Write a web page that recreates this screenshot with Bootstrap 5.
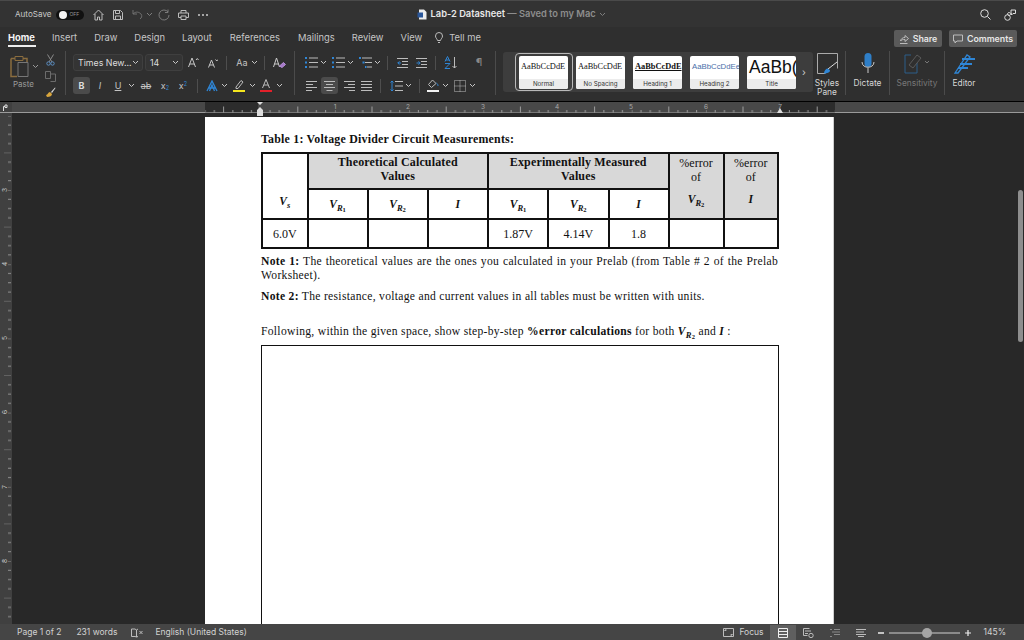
<!DOCTYPE html>
<html lang="en"><head><meta charset="utf-8"><title>Lab-2 Datasheet</title>
<link href="https://cdn.jsdelivr.net/npm/bootstrap@5.3.0/dist/css/bootstrap.min.css" rel="stylesheet">
<style>
html,body{margin:0;height:640px;overflow:hidden;background:#282828}
body{font-family:Inter,"Liberation Sans",sans-serif;font-size:9px;color:#d8d8d8;line-height:1.1}
svg{display:block;flex:none;fill:none;stroke:#bcbcbc;stroke-width:1}
.appwin{width:1024px;height:640px}
.ttl{height:27px;background:#333;border-top:1px solid #4a4a4a;padding-top:1px}
.ttl-c{font-weight:600;color:#e8e8e8;font-size:9.3px;padding-left:1px;margin-left:208px;flex:1}
.ttl-c span{color:#8d8d8d}
.autos{padding-left:15px;font-size:8.1px;color:#c8c8c8}
.tog{width:28px;height:10px;background:#111;border-radius:5px;margin-left:4px;font-size:5px;color:#999;padding-left:3px}
.tog b{width:8px;height:8px;border-radius:50%;background:#f2f2f2;display:block;margin-right:3px}
.tabs{height:23px;background:#2f2f2f;padding-right:7px;font-size:9.4px}
.tabrow{padding:0 0 1px 8px}
.tb{color:#c6c6c6}
.tb-on{color:#f4f4f4;font-weight:700;position:relative}
.tb-on::after{content:"";position:absolute;left:0;right:-1px;top:12px;height:2px;background:#ededed}
.t-a,.t-b,.t-c,.t-d,.t-g,.t-h{margin-left:17px}.t-e,.t-f{margin-left:18px}.t-i{margin-left:13px}.t-j{margin-left:6px}
.sharebtn{height:17px;background:#5a5a5a;border-radius:2px;color:#e6e6e6;font-weight:600;font-size:8.8px}
.w48{width:48px}.w68{width:68px}
.rib{height:52px;background:#2f2f2f;border-bottom:1px solid #000}
.grp{height:44px;margin-top:1px;border-right:1px solid #4b4b4b;flex:none}
.g-clip{width:66px}.g-font{width:229px;padding:3px 0 0 7px}.g-para{width:201px;padding:3px 0 0 10px}
.rw{height:17px;margin-bottom:6px}
.vs{width:1px;height:14px;background:#4e4e4e;flex:none}
.combo{height:17px;border:1px solid #3f3f3f;background:#343434;border-radius:3px;font-size:8.8px;color:#ddd;padding:0 3px 0 4px}
.cmb1{width:70px}.cmb2{width:38px}
.onbox{width:17px;height:17px;background:#4b4b4b;border-radius:3px;flex:none;font-size:9px;color:#ddd}
.g1{margin-left:1px}.g2{margin-left:2px}.g3{margin-left:3px}.g4{margin-left:4px}.g5{margin-left:5px}.g6{margin-left:6px}.g7{margin-left:7px}.g8{margin-left:8px}.g9{margin-left:9px}.g10{margin-left:10px}.g12{margin-left:12px}.g13{margin-left:13px}.g16{margin-left:16px}
.glyph{font-size:9px;color:#c4c4c4;text-align:center;flex:none}
.w10{width:10px}.w12{width:12px}.w14{width:14px}
.gal{width:310px;height:40px;background:#3d3d3d;border-radius:3px;margin:2px 0 0 7px;padding-left:16px;position:relative;flex:none}
.sty{width:49px;height:33px;background:#fff;border-radius:2px;margin-right:8px;flex:none;overflow:hidden}
.sty-t{height:23px;color:#111;font-family:"Liberation Serif",serif;font-size:8.4px;white-space:nowrap;padding-left:2px}
.sty-l{height:10px;background:#ececec;color:#333;font-size:6.2px;text-align:center;line-height:10px}
.sel{position:absolute;left:12px;top:1px;width:58px;height:38px;border:1px solid #b9b9b9;border-radius:4px}
.hd1{font-weight:700;text-decoration:underline}.hd2{color:#4a6ea8;font-family:"Liberation Sans",sans-serif;font-size:7.8px}
.titl{font-family:"Liberation Sans",sans-serif;font-size:17.5px;line-height:23px;padding-left:2px}
.gal-nx{width:8px;font-size:10px;color:#ccc;margin-left:-2px}
.bigi{padding-top:2px;flex:none;font-size:8.4px;text-align:center;color:#d6d6d6;height:44px;margin-top:1px;line-height:9px}
.icw{height:26px}
.icw svg{margin:0 auto}
.i-sty{width:28px}.sp-sty{width:5px;margin-top:1px;height:44px;border-right:1px solid #4b4b4b;flex:none}
.i-dic{width:44px;border-right:1px solid #4b4b4b}.i-sen{width:55px;border-right:1px solid #4b4b4b;color:#777}.i-edi{width:38px}
.clipl{width:44px;padding:4px 0 0 10px}.pastet{font-size:8px;color:#9a9a9a;margin:1px 0 0 -10px;padding-left:3px}
.clipr{padding-top:3px;gap:5px;width:16px;margin-left:-2px}
.sb-b{color:#2f86d6;font-size:5.5px}
.fs-pil{font-size:11px;color:#888}
.rul{height:14px;background:#282828}
.wk{flex:1;min-height:0;position:relative;overflow:hidden}
.docarea{flex:1;padding:1px 0 0 193px;overflow:hidden}
.pg{width:629px;height:510px;background:#fff;border-right:1px solid #cfcfcf;padding:15px 55px 0 56px;color:#111;font-family:"Liberation Serif",serif;font-size:11.6px;line-height:14px}
.cap{font-weight:700;font-size:11.9px;margin:0 0 6px;letter-spacing:.22px}
.tbx{width:518px;table-layout:fixed;border-collapse:collapse;margin:0;text-align:center;font-size:12px;line-height:14px}
.tbx td{border:2px solid #111;padding:0;background:#fff;vertical-align:middle}
.tbx td.gr{background:#d8d8d8}
.tbx td.tp{vertical-align:top;padding-top:2px}
.tbx td.hb{vertical-align:top;padding-top:1px}
.tbx td.vsc{vertical-align:bottom;padding-bottom:10px}
.rh1{height:36px}.rh2{height:30px}.rh3{height:29px}
.hb{font-weight:700;letter-spacing:.15px}
.mth{font-weight:700;font-style:italic;font-size:11.5px}
.mth sub{font-size:8.5px;vertical-align:-3px;line-height:0;bottom:auto}
.mth sub sub{font-size:6.5px;font-style:normal;vertical-align:-1px}
.c1{width:45.5px}.c2{width:60px}.c3{width:60.5px}.c4{width:55px}
.nt{text-align:justify;margin:6px 0 0;letter-spacing:.3px}
.nt2{margin-top:7px}.nt3{margin-top:20px;margin-bottom:6px}
.bx{width:518px;height:300px;border:1.5px solid #111}
.scr{position:absolute;right:1px;top:74px;width:5px;height:152px;border-radius:2.5px;background:#8e8e8e}
.stat{height:16px;background:#454545;font-size:8.5px;color:#d2d2d2;padding:1px 0 0 17px}
.st-on{width:26px;height:16px;background:#5f5f5f}
.sld{width:71px;height:2px;background:#8a8a8a;position:relative;flex:none}
.sld b{position:absolute;left:33px;top:-4px;width:10px;height:10px;border-radius:50%;background:#a5a5a5}
.sw1{margin-left:15px}.sw2{margin-left:14px}.sw3{margin-left:12px}.z-p{margin-left:13px;margin-right:18px}
</style></head><body>
<svg width="0" height="0" class="position-absolute"><defs>
<symbol id="cr" viewBox="0 0 7 5"><path d="M1 1l2.500 2.500L6 1" stroke="#c8c8c8" fill="none"/></symbol>
<pattern id="rt" x="260.7" y="0" width="74.2" height="14" patternUnits="userSpaceOnUse">
<path d="M0 8v2.500M9.275 8v2.500M18.55 8v2.500M27.825 8v2.500M37.1 4.500v6M46.375 8v2.500M55.65 8v2.500M64.925 8v2.500" stroke="#b4b4b4" stroke-width=".8" fill="none"/></pattern>
<pattern id="vt" x="0" y="-.2" width="12" height="74.2" patternUnits="userSpaceOnUse">
<path d="M8 0h3M8 9.275h3M8 18.55h3M8 27.825h3M8 46.375h3M8 55.65h3M8 64.925h3" stroke="#9a9a9a" stroke-width=".9" fill="none"/><path d="M4 37.1h7" stroke="#666" stroke-width=".9" fill="none"/></pattern>
</defs></svg>
<div class="appwin d-flex flex-column">
 <div class="ttl d-flex align-items-center">
  <div class="d-flex align-items-center autos">AutoSave
   <div class="tog d-flex align-items-center"><b></b>OFF</div>
   <svg class="g9" width="11" height="12" viewBox="0 0 11 12"><path d="M.5 6 5.500 1l5 5M2 5v6h2.500V8h2v3H9V5"/></svg>
   <svg class="g9" width="10" height="10" viewBox="0 0 10 10"><path d="M.5.500h7l2 2v7H.5zM2.500.5v3h4v-3M2.500 9.500V6h5v3.500"/></svg>
   <svg class="g9" width="11" height="11" viewBox="0 0 11 11"><path d="M1 1v4h4M1 5c3-3 6-2 8 0 1.500 2 .5 4-1 5" stroke="#707070"/></svg>
   <svg class="g3" width="7" height="5"><use href="#cr" opacity=".5"/></svg>
   <svg class="g5" width="12" height="12" viewBox="0 0 12 12"><path d="M10 3A5 5 0 1 0 11 6M10 .5v3H7" stroke="#7a7a7a"/></svg>
   <svg class="g8" width="11" height="10" viewBox="0 0 11 10"><path d="M3 3V.5h5V3M.5 3h10v4.500H8M3 7.500H.5V3M3 6h5v3.500H3z"/></svg>
   <svg class="g9" width="10" height="2" viewBox="0 0 10 2"><path d="M0 1h2M4 1h2M8 1h2" stroke-width="1.600" stroke="#ccc"/></svg>
  </div>
  <div class="ttl-c d-flex align-items-center justify-content-start">
   <svg width="10" height="11" viewBox="0 0 10 11"><path d="M2 .5h5l2.500 2.500v7.500H2z" fill="#eee" stroke="none"/><path d="M.5 3.500h5.500v5H.5z" fill="#2b579a" stroke="none"/></svg>
   <div class="g4 text-nowrap">Lab-2 Datasheet <span>— Saved to my Mac</span></div>
   <svg class="g3" width="7" height="5"><use href="#cr" opacity=".5"/></svg>
  </div>
  <div class="d-flex align-items-center pe-2">
   <svg width="11" height="11" viewBox="0 0 11 11"><circle cx="4.500" cy="4.500" r="3.800" stroke="#ddd"/><path d="M7.500 7.500l3 3" stroke="#ddd"/></svg>
   <svg class="g13" width="12" height="12" viewBox="0 0 12 12"><circle cx="3.500" cy="8.500" r="2.800" stroke="#ddd"/><path d="M7 1h4.500v3.500H9L7.500 6V4.500H7z" stroke="#ddd"/><path d="M5 3.500a1.500 1.500 0 1 0 .1 0" stroke="#ddd"/></svg>
  </div>
 </div>
 <div class="tabs d-flex align-items-center">
  <div class="d-flex align-items-center flex-grow-1 text-nowrap tabrow">
   <span class="tb tb-on">Home</span><span class="tb t-a">Insert</span><span class="tb t-b">Draw</span><span class="tb t-c">Design</span><span class="tb t-d">Layout</span><span class="tb t-e">References</span><span class="tb t-f">Mailings</span><span class="tb t-g">Review</span><span class="tb t-h">View</span>
   <svg class="t-i" width="8" height="12" viewBox="0 0 8 12"><path d="M2.500 8.500C2 6.500.5 6 .5 4a3.500 3.500 0 0 1 7 0c0 2-1.500 2.500-2 4.500zM3 10.500h2"/></svg>
   <span class="tb t-j">Tell me</span>
  </div>
  <div class="sharebtn w48 d-flex align-items-center justify-content-center gap-1"><svg width="10" height="10" viewBox="0 0 10 10"><path d="M1 9.500h7.500M1.500 7C2 4.500 4 3.500 6 3.500V1.500l3.500 3-3.500 3v-2c-2 0-3.500 0-4.500 1.500z"/></svg>Share</div>
  <div class="sharebtn w68 g7 d-flex align-items-center justify-content-center gap-1"><svg width="10" height="10" viewBox="0 0 10 10"><path d="M.5 1h9v6H4L2 9V7H.5z"/></svg>Comments</div>
 </div>
 <div class="rib d-flex">
  <div class="grp g-clip d-flex">
   <div class="clipl text-center">
    <svg width="29" height="24" viewBox="0 0 29 24"><path d="M1 3.500h4M13 3.500h4v4M1 3.500v18h6" stroke="#8a6d3f" stroke-width="1.500"/><path d="M5 1.500h8v4H5z" stroke="#8a6d3f"/><path d="M8 7.500h10v14H8z" stroke="#777"/><path d="M23 10l2.500 2.500L28 10" stroke="#999"/></svg>
    <div class="pastet">Paste</div>
   </div>
   <div class="clipr d-flex flex-column align-items-center">
    <svg width="9" height="12" viewBox="0 0 9 12"><path d="M1.500.5 6 8M7.500.5 3 8" stroke="#8a8a8a"/><circle cx="2.500" cy="9.500" r="1.700" stroke="#5c8fc4"/><circle cx="6.500" cy="9.500" r="1.700" stroke="#5c8fc4"/></svg>
    <svg width="11" height="11" viewBox="0 0 11 11"><path d="M.5.500h5v7h-5zM5.500 3h5v7.500h-5" stroke="#6c6c6c"/></svg>
    <svg width="11" height="11" viewBox="0 0 11 11"><path d="M6 5l4-4.500 .5.500L7 6z" fill="#ddd" stroke="none"/><path d="M1 8c2 0 2-3 4-3l2 2c0 2-2 3-5 3z" fill="#d9a63c" stroke="none"/></svg>
   </div>
  </div>
  <div class="grp g-font">
   <div class="rw d-flex align-items-center">
    <div class="combo cmb1 d-flex align-items-center justify-content-between">Times New...<svg width="7" height="5"><use href="#cr"/></svg></div>
    <div class="combo cmb2 g2 d-flex align-items-center justify-content-between">14<svg width="7" height="5"><use href="#cr"/></svg></div>
    <svg class="g5" width="11" height="11" viewBox="0 0 11 11"><path d="M.5 10 4 1l3.500 9M1.800 7h4.400M8 3l1.300-1.500L10.500 3" stroke="#c8c8c8"/></svg>
    <svg class="g9" width="10" height="10" viewBox="0 0 10 10"><path d="M.5 9.500 3.500 2l3 7.500M1.500 7h4M7.500 1.500 8.800 3l1.200-1.500" stroke="#c8c8c8"/></svg>
    <div class="vs g8"></div>
    <span class="glyph g9 w12">Aa</span>
    <svg class="g3" width="7" height="5"><use href="#cr"/></svg>
    <div class="vs g6"></div>
    <svg class="g8" width="13" height="12" viewBox="0 0 13 12"><path d="M.5 10 3.500 1l3 9M1.500 7h4" stroke="#ccc"/><path d="M6.500 9l4-3.500 2 2L9 10.500z" fill="#a678c8" stroke="#b890d8"/></svg>
   </div>
   <div class="rw d-flex align-items-center">
    <div class="onbox d-flex align-items-center justify-content-center fw-bold">B</div>
    <span class="glyph g5 w10 fst-italic">I</span>
    <span class="glyph g8 w10 text-decoration-underline">U</span>
    <svg class="g5" width="7" height="5"><use href="#cr"/></svg>
    <span class="glyph g4 w14 text-decoration-line-through">ab</span>
    <span class="glyph g6 w12">x<sub class="sb-b">2</sub></span>
    <span class="glyph g6 w12">x<sup class="sb-b">2</sup></span>
    <div class="vs g8"></div>
    <svg class="g8" width="12" height="12" viewBox="0 0 12 12"><path d="M1 11 6 1l5 10M3 8h6M3.500 11 6 5l2.500 6" stroke="#2f86d6" stroke-width="1.300"/></svg>
    <svg class="g3" width="7" height="5"><use href="#cr"/></svg>
    <svg class="g5" width="12" height="13" viewBox="0 0 12 13"><path d="M3 8l5-6.500 2 1.500-5 6.500H3z"/><path d="M0 11h12v2H0z" fill="#f5e61e" stroke="none"/></svg>
    <svg class="g4" width="7" height="5"><use href="#cr"/></svg>
    <svg class="g4" width="12" height="13" viewBox="0 0 12 13"><path d="M2.500 9 6 .5 9.500 9M3.800 6h4.400"/><path d="M0 11h12v2H0z" fill="#e3202a" stroke="none"/></svg>
    <svg class="g4" width="7" height="5"><use href="#cr"/></svg>
   </div>
  </div>
  <div class="grp g-para">
   <div class="rw d-flex align-items-center">
    <svg width="13" height="11" viewBox="0 0 13 11"><path d="M4 1h9M4 5.500h9M4 10h9"/><path d="M0 0h2v2H0zM0 4.500h2v2H0zM0 9h2v2H0z" fill="#2f86d6" stroke="none"/></svg>
    <svg class="g2" width="7" height="5"><use href="#cr"/></svg>
    <svg class="g5" width="13" height="11" viewBox="0 0 13 11"><path d="M4 1h9M4 5.500h9M4 10h9"/><path d="M0 0h2v2H0zM0 4.500h2v2H0zM0 9h2v2H0z" fill="#2f86d6" stroke="none"/></svg>
    <svg class="g2" width="7" height="5"><use href="#cr"/></svg>
    <svg class="g5" width="13" height="11" viewBox="0 0 13 11"><path d="M3 1h10M6 5.500h7M8 10h5"/><path d="M0 0h2v2H0zM3.500 4.500h2v2h-2zM6 9h1.500v2H6z" fill="#2f86d6" stroke="none"/></svg>
    <svg class="g2" width="7" height="5"><use href="#cr"/></svg>
    <div class="vs g6"></div>
    <svg class="g9" width="11" height="10" viewBox="0 0 11 10"><path d="M0 .5h11M5 3.500h6M5 6.500h6M0 9.500h11"/><path d="M4 5H.8M2.500 3.300.8 5l1.700 1.700" stroke="#2f86d6"/></svg>
    <svg class="g8" width="11" height="10" viewBox="0 0 11 10"><path d="M0 .5h11M5 3.500h6M5 6.500h6M0 9.500h11"/><path d="M.5 5H4M2.500 3.300 4.200 5 2.500 6.700" stroke="#2f86d6"/></svg>
    <div class="vs g8"></div>
    <svg class="g8" width="14" height="13" viewBox="0 0 14 13"><path d="M1 5.500 3.500 .5 6 5.500M1.800 4h3.400M1 7.500h5L1 12.500h5" stroke="#2f86d6"/><path d="M10.500 1v11M8.500 10l2 2 2-2"/></svg>
    <span class="glyph g16 w10 fs-pil">¶</span>
   </div>
   <div class="rw d-flex align-items-center">
    <svg class="g1" width="11" height="10" viewBox="0 0 11 10"><path d="M0 .5h11M0 3.500h7M0 6.500h11M0 9.500h6"/></svg>
    <div class="onbox g4 d-flex align-items-center justify-content-center"><svg width="11" height="10" viewBox="0 0 11 10"><path d="M0 .5h11M2 3.500h7M0 6.500h11M2.500 9.500h6"/></svg></div>
    <svg class="g6" width="11" height="10" viewBox="0 0 11 10"><path d="M0 .5h11M4 3.500h7M0 6.500h11M5 9.500h6"/></svg>
    <svg class="g6" width="11" height="10" viewBox="0 0 11 10"><path d="M0 .5h11M0 3.500h11M0 6.500h11M0 9.500h11"/></svg>
    <div class="vs g8"></div>
    <svg class="g9" width="13" height="12" viewBox="0 0 13 12"><path d="M5 1.500h8M5 6h8M5 10.500h8"/><path d="M2 1v10M.5 2.500 2 1l1.500 1.500M.5 9.500 2 11l1.500-1.500" stroke="#2f86d6"/></svg>
    <svg class="g2" width="7" height="5"><use href="#cr"/></svg>
    <div class="vs g7"></div>
    <svg class="g7" width="12" height="13" viewBox="0 0 12 13"><path d="M5.500 1 1.500 5.500l3 3 4.500-4z"/><path d="M9.500 4c1 .7 1.500 1.700 1.500 3" stroke="#2f86d6"/><path d="M0 11h12v2H0z" fill="#f2f2f2" stroke="none"/></svg>
    <svg class="g3" width="7" height="5"><use href="#cr"/></svg>
    <svg class="g5" width="12" height="12" viewBox="0 0 12 12"><path d="M.5.500h11v11H.5zM6 .5v11M.5 6h11" stroke-dasharray="1 1"/></svg>
    <svg class="g3" width="7" height="5"><use href="#cr"/></svg>
   </div>
  </div>
  <div class="gal d-flex align-items-center">
   <div class="sel"></div>
   <div class="sty"><div class="sty-t d-flex align-items-center">AaBbCcDdE</div><div class="sty-l">Normal</div></div>
   <div class="sty"><div class="sty-t d-flex align-items-center">AaBbCcDdE</div><div class="sty-l">No Spacing</div></div>
   <div class="sty"><div class="sty-t d-flex align-items-center hd1">AaBbCcDdE</div><div class="sty-l">Heading 1</div></div>
   <div class="sty"><div class="sty-t d-flex align-items-center hd2">AaBbCcDdEe</div><div class="sty-l">Heading 2</div></div>
   <div class="sty"><div class="titl sty-t">AaBb(</div><div class="sty-l">Title</div></div>
   <div class="gal-nx">›</div>
  </div>
  <div class="bigi i-sty"><div class="icw"><svg width="21" height="21" viewBox="0 0 21 21"><path d="M.5.5h20v15M.5.5v20h8" stroke="#aaa"/><path d="M20 9 11 16" stroke="#ddd"/><path d="M7 20.500c0-3 2-5 4-5l2 2c0 2-3 3-6 3z" fill="#2f86d6" stroke="none"/></svg></div>Styles<br>Pane</div>
  <div class="sp-sty"></div>
  <div class="bigi i-dic"><div class="icw"><svg width="14" height="20" viewBox="0 0 14 20"><rect x="3.500" y="0" width="7" height="14" rx="3.500" fill="#2f7fc8" stroke="none"/><path d="M1 9c0 7 12 7 12 0M7 15v5" stroke="#ccc"/></svg></div>Dictate</div>
  <div class="bigi i-sen"><div class="icw"><svg width="26" height="21" viewBox="0 0 26 21"><path d="M1 2h6M1 2v18h12V10" stroke="#2d5f8a"/><path d="M5 12l8-10 4 3-8 10z" stroke="#5a5a5a"/><path d="M21 8l2 2 2-2" stroke="#777"/></svg></div>Sensitivity</div>
  <div class="bigi i-edi"><div class="icw"><svg width="22" height="21" viewBox="0 0 22 21"><path d="M2 20 14 2l3 2L5 20z" stroke="#2f86d6" stroke-width="1.300"/><path d="M9 6h13M7 11h12M5 15h10" stroke="#2f86d6" stroke-width="2"/></svg></div>Editor</div>
 </div>
 <svg class="rul" width="1024" height="14" viewBox="0 0 1024 14">
  <rect width="1024" height="14" fill="#282828" stroke="none"/>
  <rect x="0" y="0" width="12" height="14" fill="#404040" stroke="none"/>
  <rect x="12" y="0" width="193" height="10" fill="#484848" stroke="none"/>
  <rect x="835" y="0" width="189" height="10" fill="#484848" stroke="none"/>
  <rect x="258" y="0" width="522" height="10" fill="#484848" stroke="none"/>
  <rect x="205" y="0" width="53" height="10" fill="#2c2c2c" stroke="none"/>
  <rect x="780" y="0" width="55" height="10" fill="#2c2c2c" stroke="none"/>
  <path d="M0 10.500h205M835 10.500h189" stroke="#9a9a9a"/>
  <path d="M205 10.500h630" stroke="#777"/>
  <rect x="205" y="0" width="630" height="12" fill="url(#rt)" stroke="none"/>
  <path d="M3.500 9V4.500H5M5 3h2v2.500H5z" stroke="#ddd"/>
  <g fill="#a8a8a8" stroke="none" font-family="Inter,sans-serif" font-size="6.500" text-anchor="middle">
   <text x="335" y="7">1</text><text x="408" y="7">2</text><text x="483" y="7">3</text><text x="557" y="7">4</text><text x="631" y="7">5</text><text x="706" y="7">6</text><text x="780" y="7">7</text></g>
  <path d="M257 0h6l-3 3zM257 8l3-3 3 3v6h-6z" fill="#ddd" stroke="none"/>
  <path d="M777 11l3-5 3 5z" fill="#ddd" stroke="none"/>
 </svg>
 <div class="wk d-flex">
  <svg width="12" height="508" viewBox="0 0 12 508">
   <rect width="12" height="508" fill="#404040" stroke="none"/>
   <rect width="12" height="508" fill="url(#vt)" stroke="none"/>
   <g fill="#c8c8c8" stroke="none" font-family="Inter,sans-serif" font-size="6.500" text-anchor="middle">
    <text transform="translate(7,74) rotate(-90)">3</text><text transform="translate(7,148) rotate(-90)">4</text><text transform="translate(7,222) rotate(-90)">5</text><text transform="translate(7,296) rotate(-90)">6</text><text transform="translate(7,371) rotate(-90)">7</text><text transform="translate(7,445) rotate(-90)">8</text></g>
  </svg>
  <div class="docarea">
   <div class="pg">
    <p class="cap">Table 1: Voltage Divider Circuit Measurements:</p>
    <table class="tbx">
     <colgroup><col class="c1"><col class="c2"><col class="c2"><col class="c3"><col class="c2"><col class="c3"><col class="c2"><col class="c4"><col></colgroup>
     <tr class="rh1"><td rowspan="2" class="vsc"><span class="mth">V<sub>s</sub></span></td><td colspan="3" class="gr hb">Theoretical Calculated<br>Values</td><td colspan="3" class="gr hb">Experimentally Measured<br>Values</td>
      <td rowspan="2" class="gr tp">%error<br>of<div class="mt-2 mth">V<sub>R<sub>2</sub></sub></div></td><td rowspan="2" class="gr tp">%error<br>of<div class="mt-2 mth">I</div></td></tr>
     <tr class="rh2"><td><span class="mth">V<sub>R<sub>1</sub></sub></span></td><td><span class="mth">V<sub>R<sub>2</sub></sub></span></td><td><span class="mth">I</span></td><td><span class="mth">V<sub>R<sub>1</sub></sub></span></td><td><span class="mth">V<sub>R<sub>2</sub></sub></span></td><td><span class="mth">I</span></td></tr>
     <tr class="rh3"><td>6.0V</td><td></td><td></td><td></td><td>1.87V</td><td>4.14V</td><td>1.8</td><td></td><td></td></tr>
    </table>
    <p class="nt"><b>Note 1:</b> The theoretical values are the ones you calculated in your Prelab (from Table # 2 of the Prelab Worksheet).</p>
    <p class="nt nt2"><b>Note 2:</b> The resistance, voltage and current values in all tables must be written with units.</p>
    <p class="nt nt3">Following, within the given space, show step-by-step <b>%error calculations</b> for both <span class="mth">V<sub>R<sub>2</sub></sub></span> and <span class="mth">I</span> :</p>
    <div class="bx"></div>
   </div>
  </div>
  <div class="scr"></div>
 </div>
 <div class="stat d-flex align-items-center text-nowrap">
  <span>Page 1 of 2</span><span class="sw1">231 words</span>
  <svg class="sw2" width="12" height="10" viewBox="0 0 12 10"><path d="M.5 1h3.500l1.500 1v7L4 8.500H.5zM5.500 2 7 1M5.500 9 7 8.500M8.500 3l3 3M11.500 3l-3 3"/></svg>
  <span class="sw3">English (United States)</span>
  <div class="flex-grow-1"></div>
  <svg width="11" height="9" viewBox="0 0 11 9"><path d="M.5.500h10v8H.5z"/><path d="M2 3V2h1.500M9 6v1H7.500" stroke="#ddd"/></svg>
  <span class="g5">Focus</span>
  <div class="st-on g6 d-flex align-items-center justify-content-center"><svg width="10" height="10" viewBox="0 0 10 10"><path d="M.5.500h9v9h-9zM.5 3.500h9M.5 6.500h9" stroke="#eee"/></svg></div>
  <svg class="g7" width="11" height="10" viewBox="0 0 11 10"><path d="M.5.500h6M.5.500v7h4M2 3h6M2 5.500h3"/><circle cx="8" cy="7.500" r="2.200"/></svg>
  <svg class="g16" width="10" height="8" viewBox="0 0 10 8"><path d="M0 .5h2M4 .5h6M2 3h8M4 5.500h6M0 7.500h2" stroke="#8a8a8a"/></svg>
  <svg class="g16" width="10" height="8" viewBox="0 0 10 8"><path d="M0 .5h10M0 3h8M0 5.500h10M2 7.500h6"/></svg>
  <svg class="g12" width="6" height="2" viewBox="0 0 6 2"><path d="M0 1h6" stroke="#eee" stroke-width="1.500"/></svg>
  <div class="sld g5"><b></b></div>
  <svg class="g5" width="6" height="6" viewBox="0 0 6 6"><path d="M0 3h6M3 0v6" stroke="#eee" stroke-width="1.200"/></svg>
  <span class="z-p">145%</span>
 </div>
</div>
</body></html>
